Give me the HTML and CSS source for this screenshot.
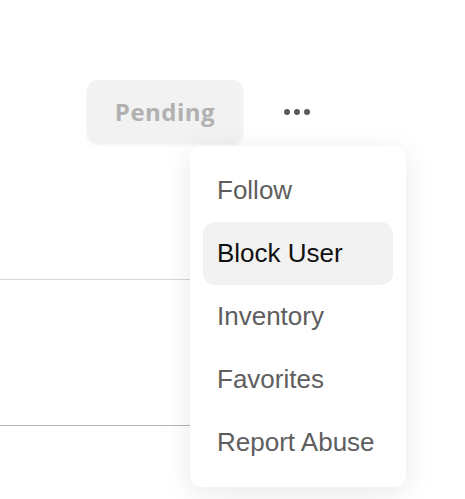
FILE: index.html
```html
<!DOCTYPE html>
<html>
<head>
<meta charset="utf-8">
<link rel="stylesheet" href="styles.css">
</head>
<body>
<div class="page">
  <div class="header">
    <button class="pending">Pending</button>
    <button class="more" aria-label="More">
      <span class="dot"></span><span class="dot"></span><span class="dot"></span>
    </button>
  </div>
  <div class="list">
    <div class="row row-first"></div>
    <div class="row row-second"></div>
  </div>
  <ul class="menu">
    <li class="menu-item">Follow</li>
    <li class="menu-item active">Block User</li>
    <li class="menu-item">Inventory</li>
    <li class="menu-item">Favorites</li>
    <li class="menu-item">Report Abuse</li>
  </ul>
</div>
</body>
</html>
```

FILE: styles.css
```css
* { box-sizing: border-box; }
html, body {
  margin: 0;
  padding: 0;
  background: #ffffff;
}
body {
  font-family: "Liberation Sans", Arial, sans-serif;
  width: 465px;
  height: 499px;
  overflow: hidden;
}
.page {
  position: relative;
  width: 465px;
  height: 499px;
}
.header {
  display: flex;
  justify-content: flex-end;
  align-items: center;
  gap: 32px;
  padding-top: 80px;
  padding-right: 146px;
}
.pending {
  width: 156px;
  height: 64px;
  border: none;
  border-radius: 11px;
  background: #f2f2f2;
  color: #b1b1b1;
  font-family: "Open Sans", "Liberation Sans", Arial, sans-serif;
  font-weight: 700;
  font-size: 24px;
  letter-spacing: 0.5px;
  line-height: 64px;
  padding: 0;
  box-shadow: 0 1px 3px rgba(0, 0, 0, 0.06);
}
.more {
  width: 44px;
  height: 64px;
  border: none;
  background: transparent;
  padding: 0;
  display: flex;
  align-items: center;
  justify-content: center;
  gap: 4px;
}
.dot {
  width: 6px;
  height: 6px;
  border-radius: 50%;
  background: #5a5a5a;
}
.list {
  display: flex;
  flex-direction: column;
  width: 200px;
}
.row-first {
  height: 136px;
  border-bottom: 1px solid #d4d4da;
}
.row-second {
  height: 146px;
  border-bottom: 1px solid #b2b2bc;
}
.menu {
  position: absolute;
  top: 146px;
  left: 190px;
  width: 216px;
  margin: 0;
  padding: 13px;
  list-style: none;
  background: #ffffff;
  border-radius: 12px;
  box-shadow: 0 6px 30px rgba(0, 0, 0, 0.09);
}
.menu-item {
  height: 63px;
  line-height: 63px;
  padding-left: 14px;
  font-size: 26px;
  color: #5e5e5e;
  border-radius: 12px;
  white-space: nowrap;
}
.menu-item.active {
  background: #f2f2f2;
  color: #111111;
}
```
